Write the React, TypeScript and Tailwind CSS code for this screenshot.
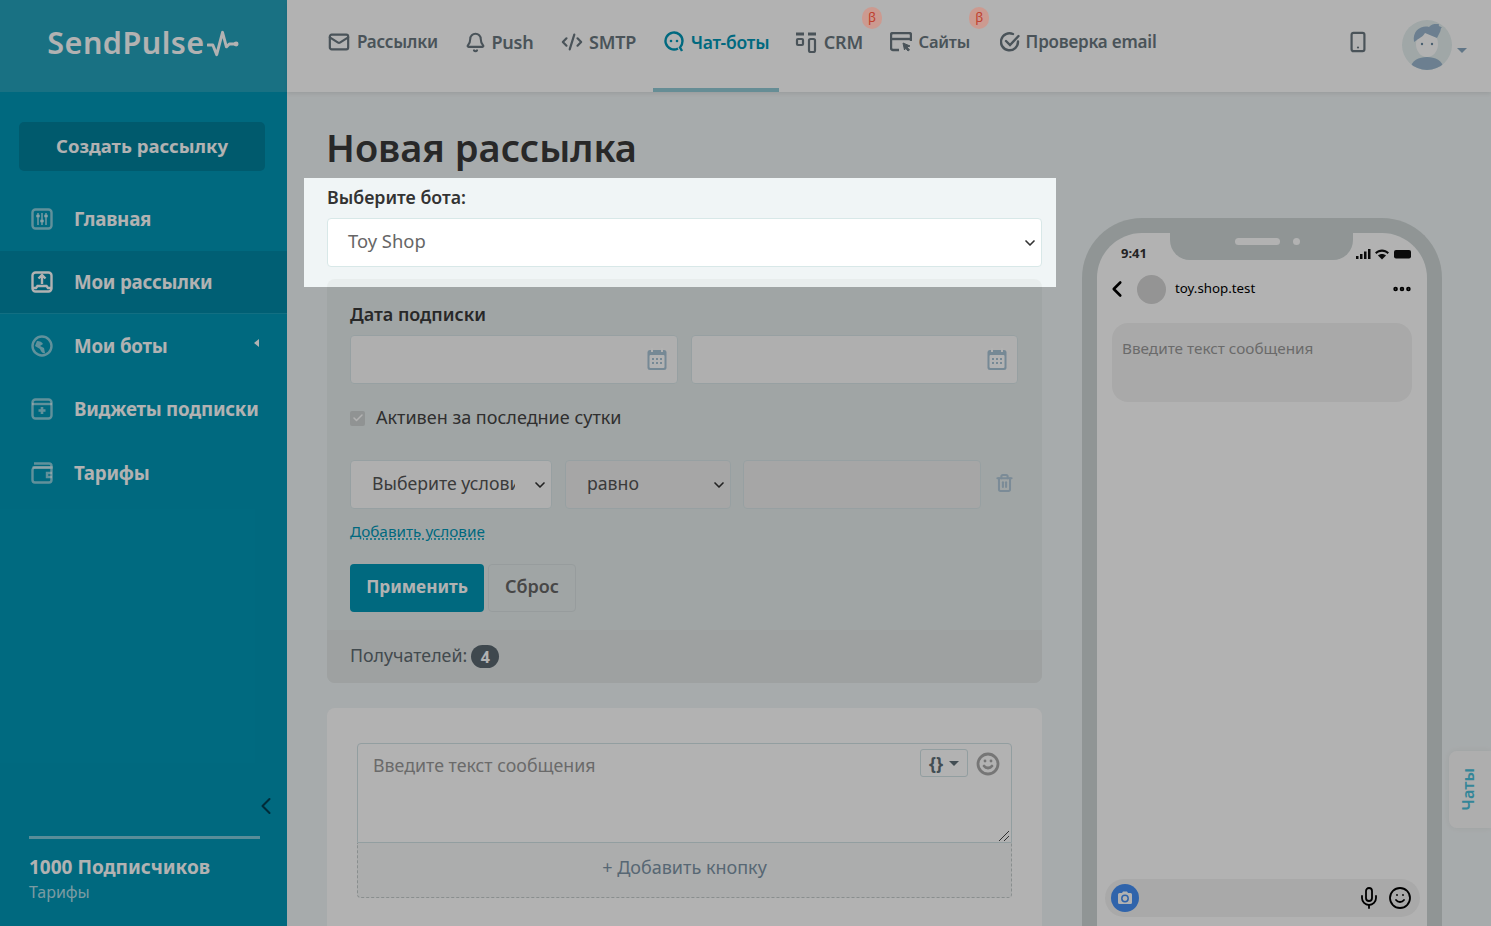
import React from 'react';
import { ChevronDown, ChevronLeft, Mail, Bell, Code2, Smartphone, Trash2, Smile, Mic, MoreHorizontal, Check } from 'lucide-react';

const font = { fontFamily: '"Noto Sans", sans-serif' };

const LogoPulse = () => (
  <svg width="33" height="28" viewBox="0 0 34 28" fill="none" stroke="currentColor" strokeWidth="3" strokeLinejoin="round" strokeLinecap="round">
    <path d="M1 16h5l4 10 6-23 4 15 3-3h7" />
    <circle cx="30" cy="15" r="2.5" fill="currentColor" stroke="none" />
  </svg>
);

const NavIcon = ({ kind }: { kind: string }) => {
  const c = { width: 22, height: 22, viewBox: '0 0 22 22', fill: 'none', stroke: 'currentColor', strokeWidth: 2.4 };
  if (kind === 'home') return (
    <svg {...c}><rect x="1.500" y="1.500" width="19" height="19" rx="3" /><path d="M7 5v12M15 5v12M11 5v12" strokeWidth="1.8" /><path d="M5 8h4M9 13h4M13 8h4" /></svg>
  );
  if (kind === 'send') return (
    <svg {...c}><rect x="1.500" y="1.500" width="19" height="19" rx="3" /><path d="M11 13V4M7.500 7.500 11 4l3.500 3.500" /><path d="M1 17h4l1.500-2h9l1.500 2h4" /></svg>
  );
  if (kind === 'bots') return (
    <svg {...c}><circle cx="11" cy="11" r="9.500" /><path d="M6 6c3 0 5 1 6 3l-3 2 4 2 1 5c-3 1-4-2-5-4L4 11" fill="currentColor" stroke="none" /></svg>
  );
  if (kind === 'widgets') return (
    <svg {...c}><rect x="1.500" y="1.500" width="19" height="19" rx="3" /><path d="M1 6h20" /><path d="M11 9v7M7.500 12.500h7" strokeWidth="2.600" /></svg>
  );
  return (
    <svg {...c}><path d="M20.500 5.500H4a2.500 2.500 0 0 0-2.500 2.500v10A2.500 2.500 0 0 0 4 20.500h14a2.500 2.500 0 0 0 2.500-2.500z" /><path d="M3 1.500h15a2.500 2.500 0 0 1 2.500 2.500v1.500H1.500" /><path d="M21 11h-5v4h5" /></svg>
  );
};

const sideItems = [
  { label: 'Главная', icon: 'home' },
  { label: 'Мои рассылки', icon: 'send', active: true },
  { label: 'Мои боты', icon: 'bots', arrow: true },
  { label: 'Виджеты подписки', icon: 'widgets' },
  { label: 'Тарифы', icon: 'plans' },
];

const Sidebar = () => (
  <aside className="w-[287px] shrink-0 h-full flex flex-col bg-[#0097b7] text-white">
    <div className="h-[92px] shrink-0 bg-[#25a3bc] flex items-center justify-center gap-0.5 pb-[7px]">
      <span className="text-[30.500px] font-semibold tracking-[0.5px] leading-none">SendPulse</span>
      <LogoPulse />
    </div>
    <div className="pl-[19px] pr-[22px] pt-[30px] pb-[16px]">
      <div className="h-[49px] rounded-[5px] bg-[#00819d] flex items-center justify-center pb-[2px] text-[18.500px] font-bold">Создать рассылку</div>
    </div>
    <nav className="flex flex-col">
      {sideItems.map((it) => (
        <div key={it.label} className={`relative h-[63.5px] pl-[31px] flex items-center gap-[21px] text-[18.700px] font-bold ${it.active ? 'bg-[#0088a7] border-b border-[#1aa0bb]' : ''}`}>
          <span className={it.active ? 'text-white' : 'text-white/55'}><NavIcon kind={it.icon} /></span>
          <span className="whitespace-nowrap tracking-[-0.2px]">{it.label}</span>
          {it.arrow && <span className="absolute right-[28px] top-[25px] w-0 h-0 border-y-[4px] border-y-transparent border-r-[5px] border-r-white" />}
        </div>
      ))}
    </nav>
    <div className="mt-auto px-[29px] pb-[21px]">
      <div className="flex justify-end -mr-[22px] mb-[16px] text-[#003f52]"><ChevronLeft size={28} strokeWidth={1.8} /></div>
      <div className="h-[3px] w-[231px] bg-white/50 mb-[16px]" />
      <div className="text-[19px] font-bold leading-[25px] whitespace-nowrap">1000 Подписчиков</div>
      <div className="text-[16px] text-white/70 leading-[25px]">Тарифы</div>
    </div>
  </aside>
);

// бейдж лежит над затемнением, поэтому цвета уже приглушённые
const Beta = () => (
  <span className="absolute z-30 top-[7px] -right-[19px] w-[20px] h-[22px] rounded-full bg-[#cc9a90] text-[#c0402e] text-[13px] font-normal flex items-center justify-center">β</span>
);

const CrmIcon = () => (
  <svg width="22" height="22" viewBox="0 0 22 22" fill="none" stroke="currentColor" strokeWidth="2.200"><path d="M1 3h8M13 3h8" strokeWidth="2.800" /><rect x="2" y="8" width="6" height="6" rx="1" /><rect x="14" y="8" width="6" height="13" rx="1.500" /></svg>
);
const SitesIcon = () => (
  <svg width="22" height="20" viewBox="0 0 22 20" fill="none" stroke="currentColor" strokeWidth="2.400"><path d="M9 18H3a2 2 0 0 1-2-2V3a2 2 0 0 1 2-2h16a2 2 0 0 1 2 2v6" /><path d="M1 7h20" /><path d="M13 11l7 3-3 1 2.500 3-1.500 1-2.500-3-1 2z" fill="currentColor" strokeWidth="1" /></svg>
);
const BotIcon = () => (
  <svg width="20" height="22" viewBox="0 0 20 22" fill="none" stroke="currentColor" strokeWidth="2.400"><path d="M14 17.500A8.500 8.500 0 1 1 18.500 10c0 2.500-1 5-2.500 6.500L18 20" /><circle cx="7" cy="10" r="1.300" fill="currentColor" stroke="none" /><circle cx="13" cy="10" r="1.300" fill="currentColor" stroke="none" /></svg>
);
const CheckRound = () => (
  <svg width="20" height="20" viewBox="0 0 20 20" fill="none" stroke="currentColor" strokeWidth="2.400" strokeLinecap="round"><path d="M18 9.500A8.500 8.500 0 1 1 13 2" /><path d="M6 9l4 4 8.500-9" /></svg>
);

const topItems = [
  { label: 'Рассылки', icon: <Mail size={22} strokeWidth={2.4} />, cls: 'gap-[7px] text-[17px]' },
  { label: 'Push', icon: <Bell size={21} strokeWidth={2.4} />, cls: 'gap-[5px] text-[18px]' },
  { label: 'SMTP', icon: <Code2 size={22} strokeWidth={2.4} />, cls: 'gap-[6px] text-[18px]' },
  { label: 'Чат-боты', icon: <BotIcon />, cls: 'gap-[7px] text-[17.500px] -mr-[2px]', active: true },
  { label: 'CRM', icon: <CrmIcon />, cls: 'gap-[7px] text-[18px]', beta: true },
  { label: 'Сайты', icon: <SitesIcon />, cls: 'gap-[6px] text-[16.500px] mr-[2px]', beta: true },
  { label: 'Проверка email', icon: <CheckRound />, cls: 'gap-[6px] text-[17px]' },
];

const Avatar = () => (
  <svg width="50" height="50" viewBox="0 0 50 50">
    <defs><clipPath id="av"><circle cx="25" cy="25" r="25" /></clipPath></defs>
    <g clipPath="url(#av)">
      <rect width="50" height="50" fill="#e5f0f0" />
      <path d="M8 50c1-10 9-13 17-13s16 3 17 13z" fill="#9bb7ce" />
      <ellipse cx="25" cy="24" rx="11" ry="13" fill="#ffffff" />
      <path d="M12 22c-2-12 8-17 15-15 3-4 8-3 10-3-1 2 1 3 3 3-2 2-1 4-2 5l-3 6-12-5c-2 4-6 5-8 7z" fill="#9bb7ce" />
      <circle cx="20" cy="24" r="1.200" fill="#6a8aa0" />
      <circle cx="30" cy="24" r="1.200" fill="#6a8aa0" />
    </g>
  </svg>
);

const TopBar = () => (
  <header className="h-[92px] shrink-0 bg-white flex items-stretch pl-[41px] pr-[24px] shadow-[0_2px_4px_rgba(0,0,0,0.08)] relative text-[#6a7880]">
    <div className="flex items-stretch gap-[27.5px]">
      {topItems.map((t) => (
        <div key={t.label} className={`relative flex items-center pb-[8px] font-semibold whitespace-nowrap tracking-[-0.2px] ${t.cls} ${t.active ? 'text-[#0097b7]' : ''}`}>
          {t.icon}
          <span>{t.label}</span>
          {t.active && <span className="absolute -left-[11px] -right-[10px] bottom-0 h-[4px] bg-[#93cbd6]" />}
          {t.beta && <Beta />}
        </div>
      ))}
    </div>
    <div className="ml-auto flex items-center">
      <Smartphone size={22} strokeWidth={2.4} className="mr-[33px] -mt-[8px]" />
      <span className="-mt-[3px]"><Avatar /></span>
      <span className="ml-[5px] mt-[8px] w-0 h-0 border-x-[5px] border-x-transparent border-t-[5px] border-t-[#8caac2]" />
    </div>
  </header>
);

const box = 'h-[49px] rounded-[4px] border border-[#d8e6e8]';

const CalendarIcon = () => (
  <svg width="20" height="22" viewBox="0 0 20 22" className="text-[#a9c4d6]">
    <rect x="0.500" y="2" width="19" height="20" rx="2.500" fill="currentColor" />
    <rect x="4" y="0" width="2" height="4" fill="#ffffff" />
    <rect x="14" y="0" width="2" height="4" fill="#ffffff" />
    <rect x="2.500" y="7" width="15" height="13" rx="1" fill="#ffffff" />
    <path d="M5 10h2v2H5zM9 10h2v2H9zM13 10h2v2h-2zM5 14h2v2H5zM9 14h2v2H9zM13 14h2v2h-2z" fill="currentColor" />
  </svg>
);

const DateInput = () => (
  <div className={`${box} flex-1 bg-[#fbfbfb] flex items-center justify-end pr-[10px] pb-[1px]`}>
    <CalendarIcon />
  </div>
);

const SelectField = ({ text, width, disabled }: { text: string; width: string; disabled?: boolean }) => (
  <div className={`${box} ${width} flex items-center pl-[21px] pr-[3px] text-[17.700px] text-[#555] ${disabled ? 'bg-[#eeeeee]' : 'bg-[#fbfbfb]'}`}>
    <span className="w-[143px] overflow-hidden whitespace-nowrap pb-[2px]">{text}</span>
    <ChevronDown size={16} strokeWidth={2.5} className="ml-auto shrink-0 text-[#333]" />
  </div>
);

const Filters = () => (
  <section className="rounded-b-[8px] bg-[#e6eded] overflow-hidden">
    <div className="pl-[23px] pr-[24px] pt-[15px] pb-[18px]">
      <h3 className="text-[18px] font-semibold text-[#3a3a3a] leading-[24px] mb-[9px]">Дата подписки</h3>
      <div className="flex gap-[13px]">
        <DateInput />
        <DateInput />
      </div>
      <label className="flex items-center gap-[11px] mt-[22px] h-[24px] text-[18px] text-[#444]">
        <span className="w-[15px] h-[15px] rounded-[2px] bg-[#cfd3d3] flex items-center justify-center">
          <Check size={12} strokeWidth={3} className="text-white" />
        </span>
        <span className="pb-[2px]">Активен за последние сутки</span>
      </label>
      <div className="flex items-center gap-[12px] mt-[30px]">
        <SelectField text="Выберите условие" width="w-[202px] mr-[1px]" />
        <SelectField text="равно" width="w-[166px]" disabled />
        <div className={`${box} flex-1 bg-[#eeeeee]`} />
        <Trash2 size={20} strokeWidth={2.6} className="text-[#b0c8d8] ml-[2px] mr-[4px] w-[19px] mb-[3px]" />
      </div>
      <a className="block mt-[10px] text-[15.300px] leading-[24px] text-[#0097b7] underline decoration-dotted underline-offset-2 w-fit">Добавить условие</a>
      <div className="flex gap-[4px] mt-[21px]">
        <button className="h-[48px] w-[134px] rounded-[4px] bg-[#0097b7] text-white text-[17.200px] font-bold pb-[2px]">Применить</button>
        <button className="h-[48px] w-[88px] rounded-[4px] border border-[#d8e0e1] text-[#666] text-[18px] font-semibold pb-[3px]">Сброс</button>
      </div>
    </div>
    <div className="h-[53px] bg-[#e2e7e7] px-[23px] flex items-center gap-[4px] text-[17.800px] text-[#5f6a70]">
      <span className="pb-[2px]">Получателей:</span>
      <span className="w-[28px] h-[23px] rounded-full bg-[#5b6770] text-white text-[16px] font-bold flex items-center justify-center">4</span>
    </div>
  </section>
);

const MessageCard = () => (
  <section className="mt-[25px] rounded-t-[8px] bg-white px-[30px] pt-[35px] flex-1">
    <div className="relative h-[100px] rounded-t-[4px] border border-[#d2e2e6] text-[17.800px] text-[#999] pl-[15px] pt-[8px]">
      Введите текст сообщения
      <div className="absolute right-[43px] top-[5px] w-[48px] h-[28px] rounded-[3px] border border-[#d2e2e6] flex items-center justify-center gap-[6px] text-[#5f6f78] text-[18px] font-bold leading-none">
        {'{}'}
        <span className="w-0 h-0 border-x-[5px] border-x-transparent border-t-[5px] border-t-[#5f6f78]" />
      </div>
      <Smile size={24} strokeWidth={2.8} className="absolute right-[11px] top-[8px] text-[#aaaaaa]" />
      <svg width="12" height="12" viewBox="0 0 12 12" className="absolute right-[1px] bottom-[1px]" stroke="#444" strokeWidth="1"><path d="M1 12 11 2M6 12l5-5" /></svg>
    </div>
    <div className="h-[55px] rounded-b-[4px] border border-t-0 border-dashed border-[#c4cccc] bg-[#f6f8f8] flex items-center justify-center pb-[5px] text-[18px] text-[#7d94a6]">+ Добавить кнопку</div>
  </section>
);

const CameraBadge = () => (
  <svg width="28" height="28" viewBox="0 0 28 28">
    <circle cx="14" cy="14" r="14" fill="#4590f5" />
    <path d="M8.500 9h2.500l1-1.500h4L17 9h2.500A1.500 1.500 0 0 1 21 10.500v8a1.500 1.500 0 0 1-1.500 1.500h-11A1.500 1.500 0 0 1 7 18.500v-8A1.500 1.500 0 0 1 8.500 9z" fill="#ffffff" />
    <circle cx="14" cy="14.500" r="3.200" fill="none" stroke="#4590f5" strokeWidth="1.500" />
  </svg>
);

const Phone = () => (
  <div className="relative mt-[-2px] h-[708px] w-[360px] rounded-t-[60px] border-x-[15px] border-t-[15px] border-[#ced6d6] bg-white">
    <div className="absolute left-[73px] top-0 w-[183px] h-[27px] rounded-b-[20px] bg-[#ced6d6] flex items-center justify-center gap-[13px] pb-[10px] pl-[12px]">
      <span className="w-[45px] h-[7px] rounded-full bg-white" />
      <span className="w-[7px] h-[7px] rounded-full bg-white" />
    </div>
    <div className="flex justify-between items-center pt-[6px] pl-[24px] pr-[13px] h-[36px]">
      <span className="text-[13px] font-bold text-[#333]">9:41</span>
      <svg width="58" height="12" viewBox="0 0 58 12" fill="#111">
        <rect x="0" y="8" width="2.500" height="3" /><rect x="4" y="6" width="2.500" height="5" /><rect x="8" y="3.500" width="2.500" height="7.500" /><rect x="12" y="1" width="2.500" height="10" />
        <path d="M19 4.500c4-4 10-4 14 0l-1.500 1.500c-3-3-8-3-11 0zM22 7.500c2.300-2 5.700-2 8 0l-4 4z" />
        <rect x="38" y="2" width="17" height="8.500" rx="2" />
      </svg>
    </div>
    <div className="flex items-center h-[36px] mt-[2px] pl-[13px] pr-[14px] text-black">
      <ChevronLeft size={26} strokeWidth={2.4} className="-ml-[6px]" />
      <span className="w-[29px] h-[29px] rounded-full bg-[#d4d4d4] ml-[7px] mr-[9px]" />
      <span className="text-[13.300px] flex-1">toy.shop.test</span>
      <MoreHorizontal size={22} strokeWidth={3} />
    </div>
    <div className="mx-[15px] mt-[16px] h-[79px] rounded-[16px] bg-[#f3f3f3] px-[10px] pt-[14px] text-[15.300px] text-[#999] leading-[22px]">Введите текст сообщения</div>
    <div className="absolute left-[8px] right-[7px] bottom-[9px] h-[38px] rounded-full bg-[#f3f3f3] flex items-center pl-[6px] pr-[8px] text-black">
      <CameraBadge />
      <Mic size={24} strokeWidth={1.8} className="ml-auto mr-[7px]" />
      <Smile size={24} strokeWidth={1.8} />
    </div>
  </div>
);

export default function App() {
  return (
    <div style={font} className="relative w-full h-[926px] overflow-hidden bg-[#f0f5f6] flex">
      <Sidebar />
      <div className="flex-1 min-w-0 flex flex-col">
        <TopBar />
        <div className="flex-1 min-h-0 flex">
          <main className="w-[715px] ml-[40px] flex flex-col min-h-0">
            <h1 className="text-[38px] font-semibold text-[#3a3a3a] leading-[52px] mt-[29px] mb-[5px] -ml-[1px] whitespace-nowrap">Новая рассылка</h1>
            {/* поверх затемнения */}
            <div className="relative z-30 -ml-[23px] -mr-[14px] h-[109px] bg-[#f0f5f6] pl-[23px] pr-[14px] pt-[6px]">
              <div className="text-[17.800px] font-semibold text-[#333] leading-[26px] mb-[8px]">Выберите бота:</div>
              <div className="h-[49px] rounded-[4px] border border-[#d8e8e8] bg-white flex items-center pl-[20px] pr-[3px] text-[18.400px] text-[#666]">
                <span className="flex-1 pb-[3px]">Toy Shop</span>
                <ChevronDown size={16} strokeWidth={2.5} className="text-[#333]" />
              </div>
              <div className="mt-[12px] h-[8px] rounded-t-[8px] bg-[#e8eded]" />
            </div>
            <Filters />
            <MessageCard />
          </main>
          <div className="ml-[40px] pt-[128px] min-h-0">
            <Phone />
          </div>
          <div className="absolute right-0 top-[751px] w-[42px] h-[77px] rounded-l-[8px] bg-[#fafafa] flex items-center justify-center pr-[4px] shadow-[0_0_6px_rgba(0,0,0,0.06)]">
            <span className="-rotate-90 text-[16.500px] font-semibold text-[#4bc0da]">Чаты</span>
          </div>
        </div>
      </div>
      {/* затемнение для онбординга */}
      <div className="absolute inset-0 z-20 bg-black/30" />
    </div>
  );
}
